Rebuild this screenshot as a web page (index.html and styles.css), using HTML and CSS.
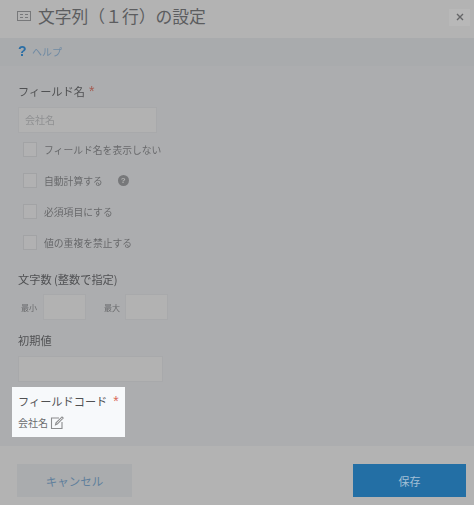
FILE: index.html
```html
<!DOCTYPE html>
<html>
<head>
	<meta charset=utf-8>
	<title>文字列（１行）の設定</title>
	<link rel="stylesheet" href="styles.css">
</head>
<body>
<div class=dialog>
	<header class=head>
		<h1>
			<svg class=title-icon width=14 height=10 viewBox="0 0 14 10" fill=none stroke="#77787a">
				<rect x=".5" y=".5" width=13 height=9 />
				<path d="M3 3.5h3M3 6.5h3M8 3.5h3M8 6.5h3" />
			</svg>
			文字列（１行）の設定
		</h1>
		<button class=close>
			<svg width=8 height=8 viewBox="0 0 8 8" stroke="#656668" stroke-width="1.4"><path d="M1 1l6 6M7 1l-6 6" /></svg>
		</button>
	</header>
	<div class=help><b>?</b><a>ヘルプ</a></div>
	<main class=content>
		<label class=label>フィールド名<i>*</i></label>
		<input class="input name" placeholder="会社名">
		<div class=checks>
			<div class=check><span class=box></span>フィールド名を表示しない</div>
			<div class=check><span class=box></span>自動計算する<span class=hint>?</span></div>
			<div class=check><span class=box></span>必須項目にする</div>
			<div class=check><span class=box></span>値の重複を禁止する</div>
		</div>
		<label class="label count">文字数 (整数で指定)</label>
		<div class=range>
			<small>最小</small><input class="input short">
			<small class=max>最大</small><input class="input short">
		</div>
		<label class="label initial">初期値</label>
		<input class="input value">
		<section class=code>
			<label class=label>フィールドコード<i>*</i></label>
			<div class=code-value>
				会社名
				<svg width=14 height=14 viewBox="0 0 14 14" fill=none stroke="#8b8c8e" stroke-width="1.1">
					<path d="M9 2H1.5v10.5H12V6" />
					<path d="M5.5 8.8l.5-2L12 .9l1.2 1.2-6 6z" fill="#fff" />
				</svg>
			</div>
		</section>
	</main>
	<footer class=foot>
		<button class=cancel>キャンセル</button>
		<button class=save>保存</button>
	</footer>
</div>
</body>
</html>
```

FILE: styles.css
```css
* {
	margin: 0;
	padding: 0;
	box-sizing: border-box;
}
body {
	width: 474px;
	height: 505px;
	overflow: hidden;
	background: #acadaf;
	font-family: "Noto Sans CJK JP", "Noto Sans", sans-serif;
	color: #58595b;
}
.dialog {
	display: flex;
	flex-direction: column;
	height: 505px;
	filter: blur(.35px);
}
.head {
	display: flex;
	align-items: center;
	justify-content: space-between;
	height: 38px;
	padding: 0 4px 6px 17px;
	background: #b3b3b3;
}
h1 {
	display: flex;
	align-items: center;
	gap: 7px;
	font-size: 16.8px;
	font-weight: 400;
	color: #5c5d5f;
}
.close {
	display: flex;
	align-items: center;
	justify-content: center;
	width: 21px;
	height: 17px;
	margin-top: 2px;
	border: 0;
	background: #b8b8b8;
}
.help {
	display: flex;
	align-items: center;
	height: 28px;
	padding: 0 0 2px 18px;
	background: #a9abad;
	font-size: 10px;
	color: #6f8aa3;
}
.help b {
	width: 14px;
	font-family: "Liberation Sans", sans-serif;
	font-size: 14px;
	color: #2b6ea5;
}
.content {
	flex: 1;
	display: flex;
	flex-direction: column;
	align-items: flex-start;
	padding: 16px 0 0 18px;
}
.label {
	font-size: 11.2px;
	line-height: 18px;
	color: #505153;
}
.label i {
	margin-left: 4px;
	font-family: "Liberation Sans", sans-serif;
	font-style: normal;
	font-size: 14px;
	color: #a4594f;
}
.input {
	height: 26px;
	border: 1px solid #a8a9ab;
	background: #b2b2b2;
	font-family: inherit;
	font-size: 10px;
	padding: 0 0 2px 6px;
	outline: 0;
}
.input::placeholder {
	color: #8f9092;
}
.name {
	width: 139px;
	margin-top: 7px;
}
.checks {
	display: flex;
	flex-direction: column;
	gap: 16px;
	margin: 9px 0 0 5px;
}
.check {
	display: flex;
	align-items: center;
	gap: 7px;
	height: 15px;
	font-size: 9.8px;
	color: #68696b;
}
.box {
	width: 14px;
	height: 15px;
	border: 1px solid #a2a3a5;
	background: #b1b1b2;
}
.hint {
	width: 11px;
	height: 11px;
	margin-left: 8px;
	border-radius: 50%;
	background: #77787a;
	color: #b3b3b3;
	font-family: "Liberation Sans", sans-serif;
	font-size: 8px;
	font-weight: 700;
	line-height: 11px;
	text-align: center;
}
.count {
	margin-top: 20px;
}
.range {
	display: flex;
	align-items: center;
	margin: 6px 0 0 3px;
}
.range small {
	width: 22px;
	font-size: 8px;
	color: #68696b;
}
.range .max {
	width: 21px;
	margin-left: 18px;
}
.short {
	width: 43px;
}
.initial {
	margin-top: 11px;
}
.value {
	width: 145px;
	margin-top: 7px;
}
.code {
	width: 113px;
	height: 50px;
	margin: 5px 0 0 -6px;
	padding: 6px 0 0 6px;
	background: #f7f9fb;
}
.code .label {
	display: block;
	line-height: 16px;
}
.code .label i {
	margin-left: 6px;
	color: #d9695a;
}
.code-value {
	display: flex;
	align-items: center;
	gap: 2px;
	margin-top: 7px;
	font-size: 10px;
	line-height: 14px;
	color: #6a6b6d;
}
.foot {
	display: flex;
	align-items: center;
	justify-content: space-between;
	height: 59px;
	padding: 10px 8px 0 17px;
	background: #b3b3b3;
}
.foot button {
	height: 33px;
	border: 0;
	font-family: inherit;
}
.cancel {
	width: 115px;
	background: #aaacae;
	font-size: 11.5px;
	color: #5f7f9c;
}
.save {
	width: 113px;
	background: #236fa5;
	font-size: 11px;
	color: #a3c0d6;
}
```
